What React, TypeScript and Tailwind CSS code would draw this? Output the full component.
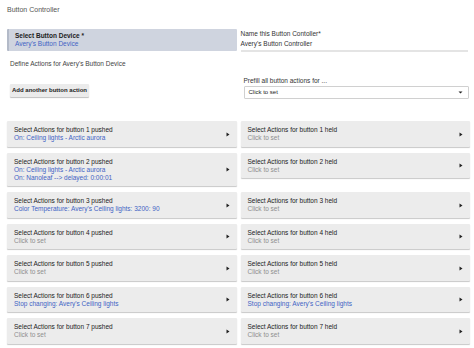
import { Fragment } from 'react';

const ACTIONS: { n: number; pushed: string[]; held: string[] }[] = [
  { n: 1, pushed: ['On: Ceiling lights - Arctic aurora'], held: [] },
  { n: 2, pushed: ['On: Ceiling lights - Arctic aurora', 'On: Nanoleaf --> delayed: 0:00:01'], held: [] },
  { n: 3, pushed: ["Color Temperature: Avery's Ceiling lights: 3200: 90"], held: [] },
  { n: 4, pushed: [], held: [] },
  { n: 5, pushed: [], held: [] },
  { n: 6, pushed: ["Stop changing: Avery's Ceiling lights"], held: ["Stop changing: Avery's Ceiling lights"] },
  { n: 7, pushed: [], held: [] },
];

function Arrow() {
  return (
    <svg width="4" height="5" viewBox="0 0 4 5" className="shrink-0">
      <path d="M0.5 0.5 L3.5 2.5 L0.5 4.5 Z" fill="#222" />
    </svg>
  );
}

function ActionCard({ title, lines }: { title: string; lines: string[] }) {
  return (
    <div className="flex items-center justify-between bg-[#ececec] rounded-[1px] shadow-[0_1px_1px_rgba(0,0,0,0.22)] pl-[7px] pr-[7px] pt-[5px] pb-[4.5px]">
      <div className="leading-[8px]">
        <div className="text-[#222]">{title}</div>
        {lines.length > 0 ? (
          lines.map((l, i) => (
            <div key={i} className="text-[#3f63c4]">{l}</div>
          ))
        ) : (
          <div className="text-[#8e8e8e]">Click to set</div>
        )}
      </div>
      <Arrow />
    </div>
  );
}

export default function App() {
  return (
    <div
      className="w-[474px] h-[348px] overflow-hidden bg-white pl-[7px] pr-[4px] text-[6.5px]"
      style={{ fontFamily: '"Liberation Sans", Arial, sans-serif' }}
    >
      <div className="pt-[6px] leading-[8px] text-[7px] text-[#555]">Button Controller</div>

      <div className="mt-[15px] grid grid-cols-2 gap-x-[4px]">
        <div className="h-[22px] bg-[#cfd4df] border-l-[2px] border-[#b3bac8] rounded-[1px] pl-[6px] pt-[3px] leading-[8px]">
          <div className="font-bold text-[#222]">Select Button Device *</div>
          <div className="text-[#3f63c4]">Avery's Button Device</div>
        </div>
        <div className="pt-[1px] leading-[8px] text-[#333] pr-[2px]">
          <div>Name this Button Contoller*</div>
          <div className="mt-[2px] pb-[2px] border-b-[2px] border-[#e4e4e4]">Avery's Button Controller</div>
        </div>
      </div>

      <div className="mt-[8px] pl-[3px] leading-[8px] text-[#444]">Define Actions for Avery's Button Device</div>

      <div className="mt-[9px] grid grid-cols-2 gap-x-[4px]">
        <div className="pl-[3px] pt-[7px]">
          <div className="w-[79px] h-[13px] flex items-center justify-center bg-[#ebebeb] rounded-[1px] shadow-[0_1px_1px_rgba(0,0,0,0.25)] font-bold text-[6px] text-[#222]">
            Add another button action
          </div>
        </div>
        <div className="pl-[3px] pr-[1px]">
          <div className="leading-[8px] text-[#333]">Prefill all button actions for ...</div>
          <div className="mt-[1px] h-[13px] flex items-center justify-between border border-[#d0d0d0] rounded-[1px] pl-[4px] pr-[5px] text-[6px] text-[#222]">
            <span>Click to set</span>
            <svg width="5" height="3" viewBox="0 0 5 3">
              <path d="M0.5 0.5 L4.5 0.5 L2.5 2.5 Z" fill="#222" />
            </svg>
          </div>
        </div>
      </div>

      <div className="mt-[22px] grid grid-cols-2 gap-x-[4px] gap-y-[6px] items-start">
        {ACTIONS.map(a => (
          <Fragment key={a.n}>
            <ActionCard title={`Select Actions for button ${a.n} pushed`} lines={a.pushed} />
            <ActionCard title={`Select Actions for button ${a.n} held`} lines={a.held} />
          </Fragment>
        ))}
      </div>
    </div>
  );
}
